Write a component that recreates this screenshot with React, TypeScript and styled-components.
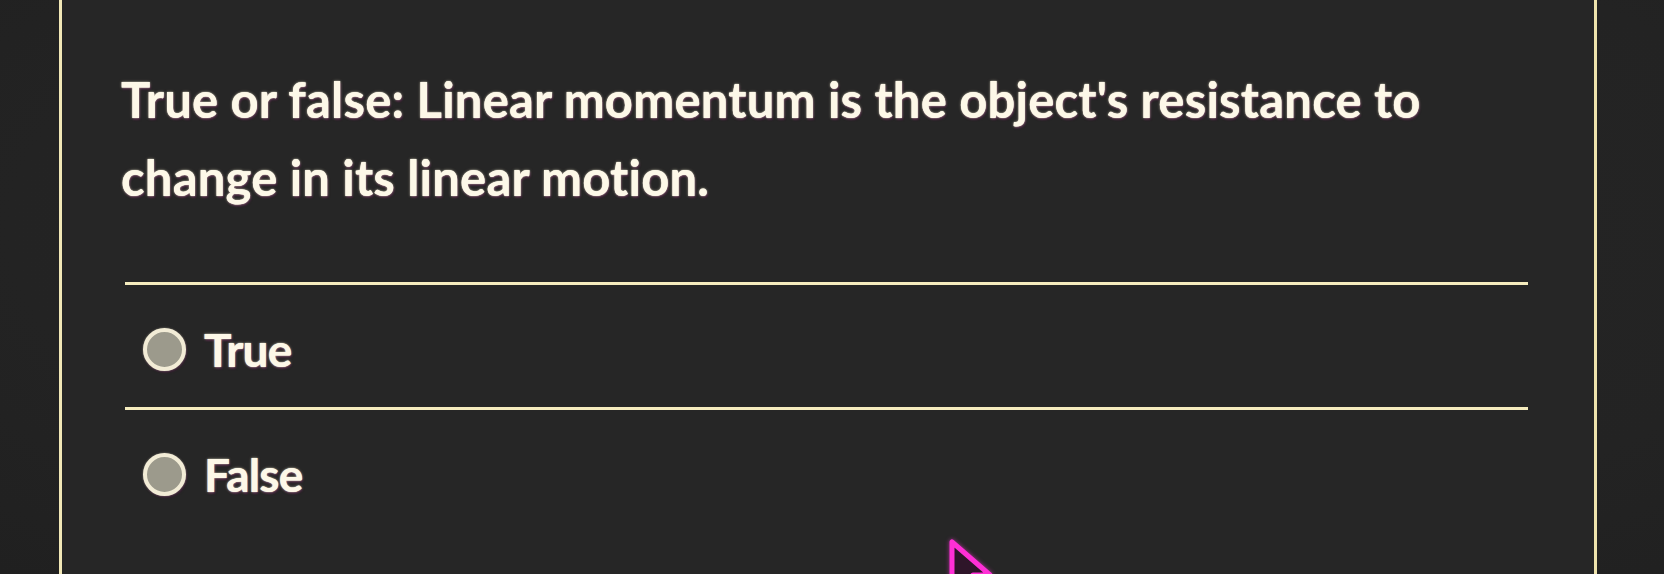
import React from "react";
import styled, { createGlobalStyle } from "styled-components";

const Global = createGlobalStyle`
  html, body { margin: 0; padding: 0; background: #222222; }
  body { font-family: Lato, "Open Sans", sans-serif; overflow: hidden; }
`;

const Page = styled.div`
  width: 1664px;
  height: 574px;
  display: flex;
  padding-left: 59px;
  box-sizing: border-box;
  background: radial-gradient(ellipse at 55% 40%, #262626 0%, #232323 70%, #202020 100%);
  position: relative;
  overflow: hidden;
`;

const Panel = styled.div`
  width: 1538px;
  height: 100%;
  box-sizing: border-box;
  border-left: 3px solid #f1e7b6;
  border-right: 3px solid #eee3ad;
  background: #262626;
  padding: 60px 0 0 59px;
  display: flex;
  flex-direction: column;
`;

const Question = styled.p`
  margin: 0;
  max-width: 1400px;
  font-size: 49px;
  line-height: 78px;
  font-weight: 700;
  color: #fdf8e8;
  letter-spacing: 0.2px;
  text-shadow: 0 0 1px #fdf8e8, 0 0 3px rgba(255, 248, 215, 0.5), 1px 2px 2px rgba(70, 20, 60, 0.7);
`;

const Options = styled.div`
  margin-top: 66px;
  margin-left: 4px;
  width: 1403px;
  display: flex;
  flex-direction: column;
`;

const Option = styled.label`
  display: flex;
  align-items: center;
  gap: 18px;
  height: 125px;
  box-sizing: border-box;
  border-top: 3px solid #f5ecbe;
  padding: 6px 0 0 18px;
  cursor: pointer;
`;

const Radio = styled.span`
  width: 43px;
  height: 43px;
  box-sizing: border-box;
  border-radius: 50%;
  border: 4px solid #f2ecd6;
  background: #9c9a8c;
  box-shadow: 0 0 2px rgba(255, 250, 225, 0.5), 1px 2px 2px rgba(70, 20, 60, 0.5);
  flex-shrink: 0;
`;

const OptionText = styled.span`
  font-size: 46px;
  font-weight: 700;
  color: #fdf8e8;
  letter-spacing: -0.8px;
  text-shadow: 0 0 1px #fdf8e8, 0 0 3px rgba(255, 248, 215, 0.5), 1px 2px 2px rgba(70, 20, 60, 0.7);
`;

const Cursor = styled.svg`
  position: absolute;
  left: 947px;
  top: 537px;
  width: 60px;
  height: 60px;
  filter: drop-shadow(0 0 2px rgba(255, 60, 220, 0.6));
`;

export default function App() {
  return (
    <>
      <Global />
      <Page>
        <Panel>
          <Question>
            True or false: Linear momentum is the object's resistance to change in its linear motion.
          </Question>
          <Options>
            <Option>
              <Radio />
              <OptionText>True</OptionText>
            </Option>
            <Option>
              <Radio />
              <OptionText>False</OptionText>
            </Option>
          </Options>
        </Panel>
        <Cursor viewBox="0 0 60 60">
          <path
            d="M5 5 L5 53 L17 41 L25 59 L33 55 L26 38 L43 38 Z"
            fill="#2e1529"
            stroke="#ff2fd6"
            strokeWidth="5"
            strokeLinejoin="round"
          />
        </Cursor>
      </Page>
    </>
  );
}
